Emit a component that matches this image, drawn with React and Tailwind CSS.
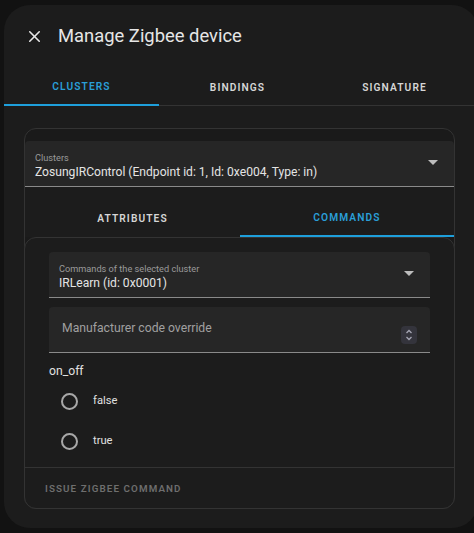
import { X } from "lucide-react";

function SelectField({ label, value }) {
  return (
    <div className="relative h-[46px] bg-[#262626] rounded-t-[4px] border-b border-[#8a8a8a] px-[10px] pt-[11px]">
      <div className="text-[9.2px] leading-[12px] text-[#9a9a9a]">{label}</div>
      <div className="text-[12.1px] leading-[16px] text-[#e4e4e4]">{value}</div>
      {/* dropdown arrow */}
      <svg className="absolute right-[16px] top-[19px]" width="10" height="6" viewBox="0 0 10 6">
        <path d="M0 0 L10 0 L5 5 Z" fill="#bdbdbd" />
      </svg>
    </div>
  );
}

function Radio({ label }) {
  return (
    <div className="flex items-center h-[40px] pl-[12px]">
      <span className="w-[17px] h-[17px] rounded-full border-2 border-[#a8a8a8]" />
      <span className="ml-[15px] text-[11.2px] text-[#e0e0e0]">{label}</span>
    </div>
  );
}

const tab = "flex items-center justify-center text-[10.2px] font-semibold tracking-[1.1px]";

export default function App() {
  return (
    <div className="w-[474px] h-[533px] bg-[#121212] overflow-hidden pt-[5px] pl-[4px]" style={{ fontFamily: "Roboto, 'Liberation Sans', sans-serif" }}>
      <div className="w-[474px] h-[523px] bg-[#1c1c1c] rounded-[26px] flex flex-col">
        {/* HEADER */}
        <div className="h-[62px] flex items-center pl-[21px]">
          <X size={19} strokeWidth={2} className="text-[#e8e8e8]" />
          <h1 className="ml-[14px] text-[18.4px] text-[#e6e6e6] font-normal">Manage Zigbee device</h1>
        </div>

        {/* TABS */}
        <div className="flex h-[39px] border-b border-[#333]">
          <div className={`${tab} w-[155px] pt-[3px] border-b-2 border-[#1e9fdb] -mb-px text-[#2a9fd8]`}>CLUSTERS</div>
          <div className={`${tab} w-[157px] pt-[3px] text-[#d6d6d6]`}>BINDINGS</div>
          <div className={`${tab} w-[157px] pt-[3px] text-[#d6d6d6]`}>SIGNATURE</div>
        </div>

        {/* CLUSTER CARD */}
        <div className="ml-[20px] mt-[22px] w-[431px] h-[381px] border border-[#333] rounded-[12px] flex flex-col bg-[#1a1a1a]">
          <div className="h-[12px]" />
          <SelectField label="Clusters" value="ZosungIRControl (Endpoint id: 1, Id: 0xe004, Type: in)" />

          <div className="flex h-[50px] bg-[#1c1c1c]">
            <div className={`${tab} w-[215px] pt-[13px] text-[#d6d6d6]`}>ATTRIBUTES</div>
            <div className={`${tab} flex-1 pt-[13px] border-b-2 border-[#1e9fdb] text-[#2a9fd8]`}>COMMANDS</div>
          </div>

          <div className="flex-1 -mx-px -mb-px border border-[#333] rounded-[12px] bg-[#1c1c1c] flex flex-col">
            <div className="px-[24px] pt-[14px]">
              <SelectField label="Commands of the selected cluster" value="IRLearn (id: 0x0001)" />

              <div className="relative mt-[9px] h-[46px] bg-[#262626] rounded-t-[4px] border-b border-[#8a8a8a] flex items-center px-[13px]">
                <span className="text-[12.2px] text-[#a0a0a0] -mt-[2px]">Manufacturer code override</span>
                <div className="absolute right-[13px] top-[19px] w-[16px] h-[18px] rounded-[4px] bg-[#34343c] flex items-center justify-center">
                  <svg width="8" height="12" viewBox="0 0 8 12" fill="none" stroke="#a6a6b4" strokeWidth="1.3">
                    <path d="M1.5 4 L4 1.5 L6.5 4" />
                    <path d="M1.5 8 L4 10.5 L6.5 8" />
                  </svg>
                </div>
              </div>

              <div className="mt-[9px] text-[12.2px] text-[#e0e0e0]">on_off</div>
              <div className="mt-[1px]">
                <Radio label="false" />
                <Radio label="true" />
              </div>
            </div>

            <div className="mt-auto border-t border-[#333] h-[41px] flex items-center pl-[20px] pt-[3px]">
              <span className="text-[9.8px] font-semibold tracking-[1.1px] text-[#6e6e6e]">ISSUE ZIGBEE COMMAND</span>
            </div>
          </div>
        </div>
      </div>
    </div>
  );
}
